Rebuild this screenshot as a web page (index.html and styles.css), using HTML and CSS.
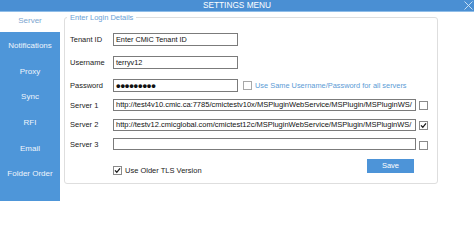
FILE: index.html
```html
<!DOCTYPE html>
<html lang="en">
<head>
<meta charset="utf-8">
<title>Settings Menu</title>
<link rel="stylesheet" href="styles.css">
</head>
<body>
<div class="window">
  <header class="titlebar">
    <span class="spacer"></span>
    <span class="title">SETTINGS MENU</span>
    <span class="close"><svg width="9" height="9" viewBox="0 0 9 9"><path d="M0.5 0.5L8.5 8.5M8.5 0.5L0.5 8.5" stroke="#d3e5f7" stroke-width="0.9" fill="none"/></svg></span>
  </header>
  <div class="layout">
    <nav class="sidebar">
      <div class="nav-item active">Server</div>
      <div class="nav-item">Notifications</div>
      <div class="nav-item">Proxy</div>
      <div class="nav-item">Sync</div>
      <div class="nav-item">RFI</div>
      <div class="nav-item">Email</div>
      <div class="nav-item">Folder Order</div>
    </nav>
    <main class="content">
      <fieldset class="group">
        <legend>Enter Login Details</legend>
        <div class="form">
          <div class="row row-tenant">
            <label class="lbl">Tenant ID</label>
            <div class="field short">Enter CMiC Tenant ID</div>
          </div>
          <div class="row row-user">
            <label class="lbl">Username</label>
            <div class="field short">terryv12</div>
          </div>
          <div class="row row-pass">
            <label class="lbl">Password</label>
            <div class="field short dots">•••••••••</div>
            <span class="cb cb-muted"></span>
            <span class="note">Use Same Username/Password for all servers</span>
          </div>
          <div class="row row-s1">
            <label class="lbl">Server 1</label>
            <div class="field long">http://test4v10.cmic.ca:7785/cmictestv10x/MSPluginWebService/MSPlugin/MSPluginWS/</div>
            <span class="cb cb-side"></span>
          </div>
          <div class="row row-s2">
            <label class="lbl">Server 2</label>
            <div class="field long">http://testv12.cmicglobal.com/cmictest12c/MSPluginWebService/MSPlugin/MSPluginWS/</div>
            <span class="cb cb-side"><svg width="7" height="7" viewBox="0 0 7 7"><path d="M1 3.4L2.8 5.3L6 1.4" stroke="#1a1a1a" stroke-width="1.3" fill="none"/></svg></span>
          </div>
          <div class="row row-s3">
            <label class="lbl">Server 3</label>
            <div class="field long"></div>
            <span class="cb cb-side cb-low"></span>
          </div>
          <div class="actions">
            <div class="tls">
              <span class="cb"><svg width="7" height="7" viewBox="0 0 7 7"><path d="M1 3.4L2.8 5.3L6 1.4" stroke="#1a1a1a" stroke-width="1.3" fill="none"/></svg></span>
              <span class="tls-text">Use Older TLS Version</span>
            </div>
            <button class="save" type="button">Save</button>
          </div>
        </div>
      </fieldset>
    </main>
  </div>
</div>
</body>
</html>
```
FILE: styles.css
```css
html, body {
  margin: 0;
  padding: 0;
}

body {
  width: 474px;
  height: 201px;
  overflow: hidden;
  background: #ffffff;
  font-family: "Liberation Sans", Arial, sans-serif;
}

.titlebar {
  height: 11px;
  background: #4a8fd3;
  border-bottom: 1px solid #8fbde8;
  display: grid;
  grid-template-columns: 1fr auto 1fr;
  align-items: center;
  color: #ffffff;
}

.title {
  font-size: 8.3px;
  line-height: 11px;
}

.close {
  justify-self: end;
  display: flex;
  margin-right: 1px;
}

.layout {
  display: flex;
  height: 189px;
}

.sidebar {
  width: 60px;
  flex: none;
  background: #4e96d9;
  display: flex;
  flex-direction: column;
}

.nav-item {
  height: 25.7px;
  box-sizing: border-box;
  padding-top: 2px;
  line-height: 23.7px;
  text-align: center;
  font-size: 8px;
  color: #eef5fc;
  white-space: nowrap;
}

.nav-item.active {
  height: 20px;
  padding-top: 0;
  line-height: 18px;
  background: #ffffff;
  color: #7da6cf;
}

.content {
  flex: 1;
  padding: 0.5px 0 0 4px;
}

.group {
  margin: 0;
  width: 374px;
  height: 171.5px;
  box-sizing: border-box;
  border: 1px solid #dedede;
  border-radius: 3px;
  padding: 0 0 0 5px;
}

.group legend {
  margin-left: -3px;
  padding: 0 3px;
  font-size: 7.5px;
  line-height: 9px;
  color: #6aa1d6;
}

.form {
  margin-top: 11.5px;
}

.row {
  display: flex;
  align-items: center;
}

.lbl {
  width: 43px;
  flex: none;
  font-size: 7.5px;
  color: #222222;
  white-space: nowrap;
}

.field {
  height: 13px;
  box-sizing: border-box;
  border: 1px solid #7b7b7b;
  padding-left: 2px;
  font-size: 7.3px;
  line-height: 11px;
  color: #111111;
  white-space: nowrap;
  overflow: hidden;
}

.short {
  width: 125px;
}

.long {
  width: 303px;
  height: 12px;
  line-height: 10px;
  font-size: 7.5px;
}

.dots {
  font-size: 13px;
  font-weight: bold;
  letter-spacing: -0.15px;
  line-height: 11px;
}

.row-user,
.row-pass {
  margin-top: 10px;
}

.row-s1 {
  margin-top: 7px;
}

.row-s2,
.row-s3 {
  margin-top: 7.5px;
}

.cb {
  width: 7px;
  height: 7px;
  flex: none;
  border: 1px solid #8a8a8a;
  background: #ffffff;
  display: flex;
  align-items: center;
  justify-content: center;
}

.cb-muted {
  margin-left: 5px;
  border-color: #a8a8a8;
}

.note {
  margin-left: 3px;
  font-size: 7.4px;
  color: #5b9bd5;
  white-space: nowrap;
}

.cb-side {
  margin-left: 3px;
  margin-top: 1px;
}

.cb-low {
  align-self: flex-end;
}

.actions {
  margin-top: 9px;
  width: 346px;
  display: flex;
  justify-content: space-between;
  align-items: flex-start;
}

.tls {
  margin-left: 43px;
  margin-top: 7px;
  display: flex;
  align-items: center;
}

.tls-text {
  margin-left: 3px;
  font-size: 7.5px;
  color: #222222;
  white-space: nowrap;
}

.save {
  width: 47px;
  height: 14px;
  margin-right: 2px;
  padding: 0;
  border: none;
  background: #4d94d8;
  color: #ffffff;
  font-family: "Liberation Sans", Arial, sans-serif;
  font-size: 7.5px;
  line-height: 14px;
}
```
